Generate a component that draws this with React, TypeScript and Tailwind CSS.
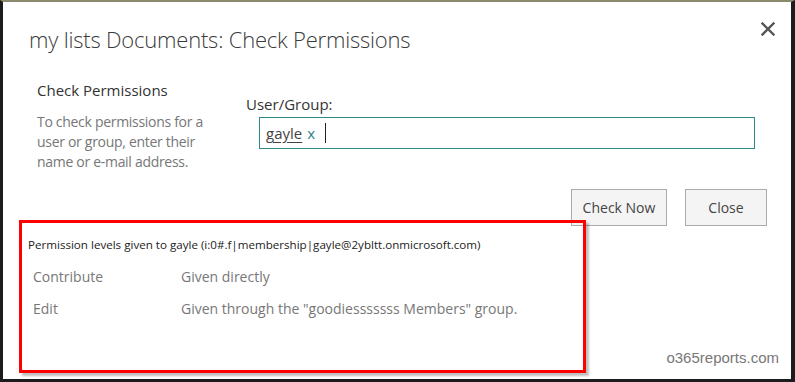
import React from "react";

export default function App() {
  return (
    <div className="relative w-[795px] h-[382px] overflow-hidden bg-white border-t-2 border-l-[3px] border-r-4 border-b-[3px] border-[#1c1c1c] border-t-[#8b8a6c] font-['Open_Sans',sans-serif]">
      {/* Header */}
      <div className="flex items-start justify-between pl-[26px] pr-[16px] pt-[21px]">
        <h1 className="text-[22px] leading-[32px] font-light tracking-[-0.2px] text-[#3a3a3a]">
          my lists Documents: Check Permissions
        </h1>
        <button className="mt-[-1px] text-[#555]" aria-label="Close">
          <svg width="14" height="14" viewBox="0 0 14 14">
            <path d="M1.5 1.5 L12.5 12.5 M12.5 1.5 L1.5 12.5" stroke="#555" strokeWidth="2.4" strokeLinecap="square" />
          </svg>
        </button>
      </div>

      {/* Body */}
      <div className="flex pl-[34px] pt-[25px]">
        <div className="w-[209px] shrink-0">
          <div className="text-[15px] leading-[20px] text-[#333]">Check Permissions</div>
          <p className="mt-[12px] w-[180px] text-[14px] leading-[20px] text-[#777] tracking-[-0.3px]">
            To check permissions for a user or group, enter their name or e-mail address.
          </p>
        </div>
        <div className="flex-1 pr-[36px] pt-[14px]">
          <div className="text-[15px] leading-[20px] text-[#333]">User/Group:</div>
          <div className="ml-[13px] mt-[3px] h-[32px] border border-[#2a8c86] flex items-center px-[6px] text-[15px] text-[#444]">
            <span className="underline underline-offset-[3px] decoration-[#444]">gayle</span>
            <span className="ml-[5px] text-[#2f7f86]">x</span>
            <span className="ml-[10px] w-px h-[20px] bg-[#222]" />
          </div>
        </div>
      </div>

      {/* Buttons */}
      <div className="flex justify-end gap-[18px] pr-[24px] mt-[17px]">
        <button className="w-[96px] h-[37px] border border-[#ababab] bg-[#f4f4f4] text-[14px] text-[#444]">
          Check Now
        </button>
        <button className="w-[82px] h-[37px] border border-[#ababab] bg-[#f4f4f4] text-[14px] text-[#444]">
          Close
        </button>
      </div>

      {/* Results */}
      <div className="pl-[25px] pt-[11px]">
        <div className="text-[11.6px] leading-[16px] text-[#222]">
          Permission levels given to gayle (i:0#.f|membership|gayle@2ybltt.onmicrosoft.com)
        </div>
        <div className="mt-[14px] grid grid-cols-[148px_1fr] gap-y-[12px] pl-[5px] text-[14px] leading-[20px] text-[#777]">
          <div>Contribute</div>
          <div>Given directly</div>
          <div>Edit</div>
          <div>Given through the "goodiesssssss Members" group.</div>
        </div>
      </div>

      {/* Red annotation box */}
      <div className="absolute left-[16px] top-[218px] w-[567px] h-[153px] border-[3px] border-[#ff0000] shadow-[3px_3px_2px_rgba(0,0,0,0.25)] pointer-events-none" />

      {/* Watermark */}
      <div className="absolute right-[12px] bottom-[12px] text-[15px] leading-[18px] text-[#777] font-['Liberation_Sans',sans-serif]">
        o365reports.com
      </div>
    </div>
  );
}
